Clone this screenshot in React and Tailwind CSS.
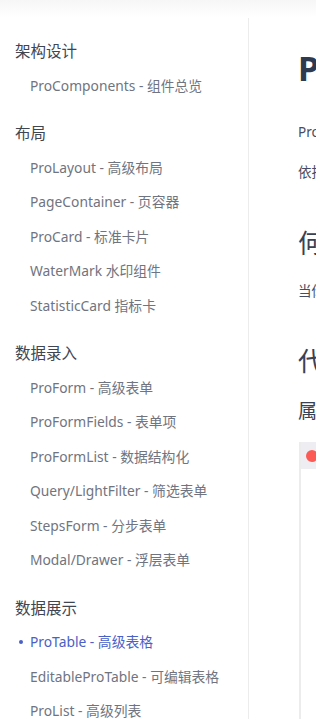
import React from 'react';

const groups = [
  { title: '架构设计', items: ['ProComponents - 组件总览'] },
  {
    title: '布局',
    items: ['ProLayout - 高级布局', 'PageContainer - 页容器', 'ProCard - 标准卡片', 'WaterMark 水印组件', 'StatisticCard 指标卡'],
  },
  {
    title: '数据录入',
    items: [
      'ProForm - 高级表单',
      'ProFormFields - 表单项',
      'ProFormList - 数据结构化',
      'Query/LightFilter - 筛选表单',
      'StepsForm - 分步表单',
      'Modal/Drawer - 浮层表单',
    ],
  },
  {
    title: '数据展示',
    items: ['ProTable - 高级表格', 'EditableProTable - 可编辑表格', 'ProList - 高级列表'],
  },
];

const active = 'ProTable - 高级表格';

export default function App() {
  return (
    <div
      className="relative w-[316px] h-[719px] overflow-hidden bg-white flex"
      style={{ fontFamily: '"Noto Sans", "Noto Sans CJK SC", sans-serif' }}
    >
      {/* header shadow */}
      <div className="absolute top-0 left-0 right-0 h-[18px] bg-gradient-to-b from-[#f6f6f6] to-white z-10" />

      {/* Sidebar */}
      <aside className="w-[249px] shrink-0 border-r border-[#ececec] pt-[35px]">
        {groups.map((g, gi) => (
          <div key={g.title} className={gi > 0 ? 'mt-[13px]' : ''}>
            <div className="h-[34px] flex items-center pl-[15px] text-[15.5px] text-[#404552]">{g.title}</div>
            {g.items.map((it) => (
              <div
                key={it}
                className={`h-[34.6px] flex items-center pl-[30px] text-[13.8px] whitespace-nowrap relative ${
                  it === active ? 'text-[#4a60c6]' : 'text-[#707480]'
                }`}
              >
                {it === active && (
                  <span className="absolute left-[19px] top-1/2 -translate-y-1/2 w-[4px] h-[4px] rounded-full bg-[#4a60c6]" />
                )}
                {it}
              </div>
            ))}
          </div>
        ))}
      </aside>

      {/* Main */}
      <main className="flex-1 min-w-0 pl-[49px] pt-[48px] whitespace-nowrap">
        <h1 className="text-[34px] leading-[40px] font-bold text-[#2d3a4f]">ProTable</h1>
        <p className="mt-[34px] text-[13.5px] leading-[20px] text-[#454d64]">
          ProTable 的诞生是为了解决项目中需要写很多 table 的样板代码的问题
        </p>
        <p className="mt-[20px] text-[13.5px] leading-[20px] text-[#454d64]">依托于 ProForm 的能力，ProForm 拥有多种形态</p>
        <h2 className="mt-[44px] text-[26px] leading-[34px] text-[#3a4152]">何时使用</h2>
        <p className="mt-[21px] text-[13.5px] leading-[20px] text-[#454d64]">
          当你的表格需要与服务端进行交互或者需要多种单元格样式时
        </p>
        <h2 className="mt-[43px] text-[26px] leading-[34px] text-[#3a4152]">代码演示</h2>
        <h3 className="mt-[21px] text-[19px] leading-[24px] text-[#3a4152]">属性</h3>
        <div className="mt-[19px] ml-[1px] border-l-[2px] border-[#ececec] h-[300px]">
          <div className="h-[27px] bg-[#eeeef2] flex items-center pl-[5px] gap-[5px]">
            <span className="shrink-0 w-[12px] h-[12px] rounded-full bg-[#fc5a55]" />
            <span className="shrink-0 w-[12px] h-[12px] rounded-full bg-[#fdbc40]" />
            <span className="shrink-0 w-[12px] h-[12px] rounded-full bg-[#34c749]" />
          </div>
        </div>
      </main>
    </div>
  );
}
